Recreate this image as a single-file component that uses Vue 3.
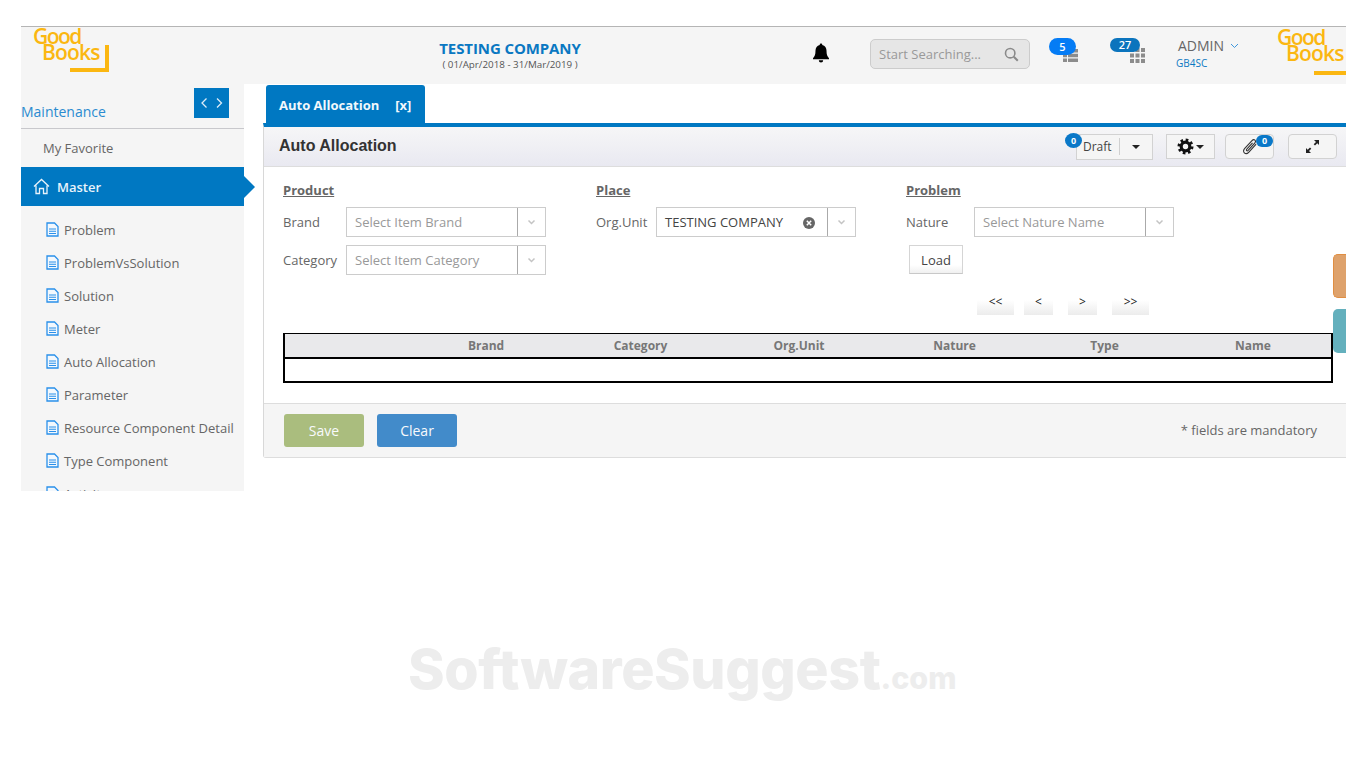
<script setup>
const menu = ['Problem','ProblemVsSolution','Solution','Meter','Auto Allocation','Parameter','Resource Component Detail','Type Component','Activity']
const cols = ['Brand','Category','Org.Unit','Nature','Type','Name']
const pager = [['<<','w37'],['<','w29'],['>','w29'],['>>','w37']]
</script>

<template>
  <div class="page">
    <header class="top">
      <div class="logo">
        <span class="good">Good</span><span class="books">Books</span>
        <i class="bracket"></i>
      </div>
      <div class="company">
        <div class="cname">TESTING COMPANY</div>
        <div class="cdate">( 01/Apr/2018 - 31/Mar/2019 )</div>
      </div>
      <svg class="bell" width="18" height="20" viewBox="0 0 18 20"><path fill="#000" d="M9 0.5a1.3 1.3 0 0 1 1.3 1.4C13 2.5 14.500 4.700 14.500 7.500c0 4 .8 6 2.500 7.700v1.100H1v-1.100C2.700 13.500 3.500 11.500 3.500 7.500 3.500 4.700 5 2.500 7.700 1.900A1.300 1.300 0 0 1 9 .5zM6.800 17.200h4.400a2.200 2.200 0 0 1-4.400 0z"/></svg>
      <div class="search">
        <span>Start Searching...</span>
        <svg width="15" height="15" viewBox="0 0 15 15"><circle cx="6.200" cy="6.200" r="4.700" fill="none" stroke="#8a8a8a" stroke-width="1.600"/><path d="M9.800 9.800l4 4" stroke="#8a8a8a" stroke-width="2"/></svg>
      </div>
      <div class="nav-ic list-ic">
        <svg width="15" height="15" viewBox="0 0 15 15"><path fill="#8c8c8c" d="M0 1h4v3.500H0zM5 1h10v3.500H5zM0 5.800h4v3.500H0zM5 5.800h10v3.500H5zM0 10.600h4v3.500H0zM5 10.600h10v3.500H5z"/></svg>
        <span class="pill pill5">5</span>
      </div>
      <div class="nav-ic grid-ic">
        <svg width="15" height="15" viewBox="0 0 15 15"><path fill="#8c8c8c" d="M0 0h4v4H0zM5.500 0h4v4h-4zM11 0h4v4h-4zM0 5.500h4v4H0zM5.500 5.500h4v4h-4zM11 5.500h4v4h-4zM0 11h4v4H0zM5.500 11h4v4h-4zM11 11h4v4h-4z"/></svg>
        <span class="pill pill27">27</span>
      </div>
      <div class="user">
        <div class="uname">ADMIN
          <svg width="9" height="6" viewBox="0 0 9 6"><path d="M1 1l3.500 3.500L8 1" fill="none" stroke="#3f97dc" stroke-width="1"/></svg>
        </div>
        <div class="ucode">GB4SC</div>
      </div>
      <div class="logo logo-r">
        <span class="good">Good</span><span class="books">Books</span>
        <i class="bracket"></i>
      </div>
    </header>

    <div class="body">
      <aside class="side">
        <div class="side-title">
          <span>Maintenance</span>
          <div class="toggle">
            <svg width="28" height="12" viewBox="0 0 28 12"><path d="M8.500 1.500L4 6 8.500 10.500M19 1.500L23.500 6 19 10.500" fill="none" stroke="#dcecf8" stroke-width="1.300"/></svg>
          </div>
        </div>
        <div class="fav">My Favorite</div>
        <div class="master">
          <svg width="17" height="17" viewBox="0 0 17 17"><path d="M1 8.500L8.500 1.500 16 8.500M3 7.500V15.500H6.500V10.500H10.500V15.500H14V7.500" fill="none" stroke="#e8f3fb" stroke-width="1.300"/></svg>
          <span>Master</span>
          <i class="notch"></i>
        </div>
        <ul class="menu">
          <li v-for="m in menu" :key="m">
            <svg width="13" height="15" viewBox="0 0 13 15"><path d="M1 1h7.500L12 4.500V14H1z" fill="#f3f8fd" stroke="#2a90ea" stroke-width="1.300"/><path d="M3 7h7M3 9.300h7M3 11.500h7" stroke="#2a90ea" stroke-width="1.100"/></svg>
            <span>{{ m }}</span>
          </li>
        </ul>
      </aside>

      <main class="main">
        <div class="tabs">
          <div class="tab"><span>Auto Allocation</span><span>[x]</span></div>
        </div>
        <section class="panel">
          <div class="phead">
            <h1>Auto Allocation</h1>
            <div class="tools">
              <div class="draft">
                <span class="tbadge tb-draft">0</span>
                <span class="dlabel">Draft</span>
                <span class="caret"></span>
              </div>
              <div class="tool gear">
                <svg width="17" height="17" viewBox="0 0 17 17"><circle cx="8.500" cy="8.500" r="6.600" fill="none" stroke="#111" stroke-width="2.800" stroke-dasharray="2.600 2.580"/><circle cx="8.500" cy="8.500" r="4.300" fill="none" stroke="#111" stroke-width="3.200"/></svg>
                <span class="caret small"></span>
              </div>
              <div class="tool round clip">
                <svg width="18" height="20" viewBox="0 0 16 18"><path d="M13.500 6.500L6.800 13.800c-1.200 1.300-2.900 1.400-3.900.5-1-.9-.9-2.600.2-3.800l6.700-7.300c.8-.9 2-1 2.700-.4.700.7.600 1.800-.2 2.700L6.300 12c-.4.400-1 .5-1.300.2-.3-.3-.3-.9.100-1.300l5.200-5.700" fill="none" stroke="#333" stroke-width="1"/></svg>
                <span class="tbadge tb-clip">0</span>
              </div>
              <div class="tool round expand">
                <svg width="15" height="15" viewBox="0 0 15 15"><path fill="#222" d="M9 1h5v5l-1.700-1.700-2.300 2.300-1.300-1.300 2.300-2.300zM1 9l1.700 1.700 2.300-2.300 1.300 1.300-2.300 2.300L6 14H1z"/></svg>
              </div>
            </div>
          </div>

          <div class="form">
            <div class="fields">
              <div class="group g1">
                <div class="gtitle">Product</div>
                <div class="row">
                  <label class="l63">Brand</label>
                  <div class="select"><span class="ph">Select Item Brand</span><b class="arrow"><svg width="9" height="6" viewBox="0 0 9 6"><path d="M1.500 1.500l3 3 3-3" fill="none" stroke="#c4c4c4" stroke-width="1.500"/></svg></b></div>
                </div>
                <div class="row">
                  <label class="l63">Category</label>
                  <div class="select"><span class="ph">Select Item Category</span><b class="arrow"><svg width="9" height="6" viewBox="0 0 9 6"><path d="M1.500 1.500l3 3 3-3" fill="none" stroke="#c4c4c4" stroke-width="1.500"/></svg></b></div>
                </div>
              </div>
              <div class="group g2">
                <div class="gtitle">Place</div>
                <div class="row">
                  <label class="l60">Org.Unit</label>
                  <div class="select">
                    <span class="val">TESTING COMPANY</span>
                    <svg class="clear-x" width="12" height="12" viewBox="0 0 12 12"><circle cx="6" cy="6" r="6" fill="#666"/><path d="M3.800 3.800l4.400 4.400M8.200 3.800L3.800 8.200" stroke="#fff" stroke-width="1.500"/></svg>
                    <b class="arrow"><svg width="9" height="6" viewBox="0 0 9 6"><path d="M1.500 1.500l3 3 3-3" fill="none" stroke="#c4c4c4" stroke-width="1.500"/></svg></b>
                  </div>
                </div>
              </div>
              <div class="group g3">
                <div class="gtitle">Problem</div>
                <div class="row">
                  <label class="l68">Nature</label>
                  <div class="select"><span class="ph">Select Nature Name</span><b class="arrow"><svg width="9" height="6" viewBox="0 0 9 6"><path d="M1.500 1.500l3 3 3-3" fill="none" stroke="#c4c4c4" stroke-width="1.500"/></svg></b></div>
                </div>
                <button class="load">Load</button>
              </div>
            </div>

            <div class="pager">
              <div v-for="p in pager" :key="p[0]" class="pbtn" :class="p[1]">{{ p[0] }}</div>
            </div>

            <div class="table">
              <div class="thead">
                <span class="c0"></span>
                <span v-for="c in cols" :key="c" class="th">{{ c }}</span>
              </div>
              <div class="tbody"></div>
            </div>
          </div>

          <div class="foot">
            <button class="btn save">Save</button>
            <button class="btn clear">Clear</button>
            <span class="mand">* fields are mandatory</span>
          </div>
        </section>
        <i class="stab orange"></i>
        <i class="stab teal"></i>
      </main>
    </div>

    <div class="mark">SoftwareSuggest<small>.com</small></div>
  </div>
</template>

<style>
html, body { margin: 0; background: #fff; }
</style>

<style scoped>
.page { position: relative; width: 1366px; height: 768px; overflow: hidden; box-sizing: border-box; padding: 26px 20px 0 21px; background: #fff; font-family: "Open Sans", sans-serif; color: #666; }

.top { height: 58px; box-sizing: border-box; border-top: 1px solid #b5b5b5; background: #f5f5f5; display: flex; position: relative; overflow: hidden; }
.logo { position: relative; width: 76px; margin-left: 12px; padding-top: 2px; flex: none; color: #fbb711; font-size: 21px; line-height: 15.500px; font-weight: 600; }
.logo span { display: block; }
.good { letter-spacing: -1.500px; }
.books { margin-left: 9px; letter-spacing: -0.800px; }
.bracket { position: absolute; left: 37px; top: 18px; width: 39px; height: 27px; box-sizing: border-box; border-right: 4px solid #fbb711; border-bottom: 4px solid #fbb711; }
.company { width: 300px; margin-left: 251px; text-align: center; flex: none; padding-top: 11px; }
.cname { font-size: 15px; line-height: 20px; font-weight: 700; color: #0a78c2; letter-spacing: -0.1px; }
.cdate { font-size: 9.800px; line-height: 14px; color: #555; }
.bell { flex: none; margin: 16px 0 0 152px; }
.search { flex: none; box-sizing: border-box; width: 160px; height: 30px; margin: 12px 0 0 40px; border: 1px solid #ccc; border-radius: 5px; background: #e6e6e6; display: flex; align-items: center; justify-content: space-between; padding: 0 10px 0 8px; font-size: 13px; color: #999; }
.nav-ic { flex: none; position: relative; width: 15px; height: 15px; margin-top: 21px; }
.list-ic { margin-left: 33px; }
.grid-ic { margin-left: 52px; }
.nav-ic svg { display: block; }
.pill { position: absolute; background: #0a7be8; color: #fff; font-size: 11px; line-height: 15px; height: 15px; text-align: center; font-weight: 600; border-radius: 8px; }
.pill5 { left: -14px; top: -10px; width: 27px; height: 17px; line-height: 17px; border-radius: 9px; background: #057cf5; }
.pill27 { left: -20px; top: -10px; width: 30px; height: 14px; line-height: 13px; background: #0b74bd; }
.user { flex: none; width: 99px; margin-left: 33px; padding-top: 9px; }
.uname { font-size: 14px; line-height: 20px; color: #666; display: flex; align-items: center; gap: 6px; }
.ucode { font-size: 10px; line-height: 12px; color: #0a78c2; margin-top: 1px; margin-left: -2px; }
.logo-r { margin-left: 0; padding-top: 3px; width: 69px; }
.logo-r .bracket { top: 21px; }

.body { display: flex; align-items: flex-start; }
.side { flex: none; width: 223px; background: #f5f5f5; }
.side-title { height: 45px; box-sizing: border-box; border-bottom: 1px solid #c8c8cc; position: relative; font-size: 14px; color: #2a8bd0; padding-top: 18px; line-height: 20px; }
.toggle { position: absolute; left: 173px; top: 4px; width: 35px; height: 30px; background: #0078c2; display: flex; align-items: center; justify-content: center; }
.fav { height: 38px; line-height: 38px; padding-left: 22px; font-size: 13px; color: #666; }
.master { position: relative; height: 39px; background: #0078c2; color: #e8f3fb; display: flex; align-items: center; gap: 7px; padding-left: 12px; font-size: 13px; font-weight: 600; }
.notch { position: absolute; left: 223px; top: 9px; width: 0; height: 0; border-left: 11px solid #0078c2; border-top: 11px solid transparent; border-bottom: 11px solid transparent; }
.menu { list-style: none; margin: 0; padding: 7px 0 0 25px; height: 285px; box-sizing: border-box; overflow: hidden; }
.menu li { height: 33px; display: flex; align-items: center; gap: 5px; font-size: 13px; color: #666; white-space: nowrap; }

.main { position: relative; flex: 1; min-width: 0; }
.tabs { height: 39px; padding: 1px 0 0 22px; box-sizing: border-box; }
.tab { width: 159px; height: 38px; box-sizing: border-box; background: #0078c2; color: #f2f8fc; border-radius: 3px 3px 0 0; display: flex; gap: 16px; padding: 1px 0 0 13px; align-items: center; font-size: 13px; font-weight: 700; white-space: nowrap; }
.panel { margin-left: 19px; border-top: 4px solid #0078c2; border-left: 1px solid #d8d8d8; border-bottom: 1px solid #ddd; border-radius: 0 0 0 3px; }
.phead { height: 40px; box-sizing: border-box; background: linear-gradient(#f6f6f7, #e9e9f1); border-bottom: 1px solid #ddd; display: flex; align-items: center; justify-content: space-between; padding: 0 9px 0 15px; }
.phead h1 { margin: 0 0 2px; font: 700 16px "Liberation Sans", Arial, sans-serif; color: #333; }
.tools { display: flex; align-items: center; gap: 13px; position: relative; }
.tool { box-sizing: border-box; width: 49px; height: 25px; border: 1px solid #d2d2d2; background: #f5f5f5; display: flex; align-items: center; justify-content: center; position: relative; gap: 1px; }
.round { border-radius: 4px; }
.clip { gap: 0; justify-content: flex-start; padding-left: 15px; margin-left: -3px; }
.expand { margin-left: 1px; }
.draft { position: relative; box-sizing: border-box; width: 77px; height: 26px; border: 1px solid #d2d2d2; background: #f5f5f5; display: flex; align-items: center; font-size: 12px; color: #444; padding-left: 6px; }
.dlabel { padding-right: 7px; border-right: 1px solid #d0d0d0; line-height: 17px; }
.caret { width: 0; height: 0; border-left: 4px solid transparent; border-right: 4px solid transparent; border-top: 4px solid #222; margin-left: 12px; }
.caret.small { margin-left: 1px; }
.tbadge { position: absolute; background: #0a78c8; color: #fff; font-size: 9px; font-weight: 700; line-height: 13px; text-align: center; }
.tb-draft { left: -12px; top: -2px; width: 17px; height: 15px; line-height: 15px; border-radius: 50%; }
.tb-clip { left: 30px; top: 0; width: 17px; height: 12px; line-height: 12px; border-radius: 6px; }

.form { height: 236px; box-sizing: border-box; padding: 14px 13px 0 19px; background: #fff; }
.fields { display: flex; height: 123px; }
.group { flex: none; font-size: 13px; color: #666; }
.g1 { width: 313px; }
.g2 { width: 310px; }
.gtitle { font-weight: 700; text-decoration: underline; line-height: 18px; height: 26px; color: #666; }
.row { display: flex; align-items: center; height: 30px; margin-bottom: 8px; }
.l63 { width: 63px; }
.l60 { width: 60px; }
.l68 { width: 68px; }
.select { position: relative; width: 200px; height: 30px; box-sizing: border-box; border: 1px solid #ccc; background: #fff; display: flex; align-items: center; padding-left: 8px; }
.ph { color: #999; }
.val { color: #444; font-size: 13px; }
.arrow { position: absolute; right: 0; top: 0; bottom: 0; width: 27px; border-left: 1px solid #aaa; display: flex; align-items: center; justify-content: center; }
.clear-x { position: absolute; left: 146px; top: 9px; }
.load { display: block; box-sizing: border-box; width: 54px; height: 29px; margin: 0 0 0 3px; padding: 0; border: 1px solid #d5d5d5; border-bottom-color: #c8c8c8; background: linear-gradient(#fff 70%, #f0f0f0); font: 13px "Open Sans", sans-serif; color: #444; }
.pager { display: flex; margin-left: 694px; height: 20px; margin-top: -9px; }
.pbtn { height: 20px; box-sizing: border-box; background: linear-gradient(#fff 25%, #ececec); font-size: 12px; line-height: 13px; color: #222; text-align: center; }
.w37 { width: 37px; margin-right: 10px; }
.w29 { width: 29px; margin-right: 15px; }
.table { margin-top: 18px; box-sizing: border-box; width: 1050px; height: 50px; border: 1px solid #000; border-bottom-width: 2px; border-left-width: 2px; border-right-width: 2px; }
.thead { height: 23px; box-sizing: border-box; background: #e9e9eb; display: grid; grid-template-columns: 124px 154px 155px 162px 149px 151px 146px; align-items: center; text-align: center; font-size: 12px; font-weight: 700; color: #777; }
.tbody { border-top: 2px solid #000; height: 23px; box-sizing: border-box; background: #fff; }

.foot { height: 54px; box-sizing: border-box; background: #f5f5f5; border-top: 1px solid #ddd; display: flex; align-items: flex-start; padding: 10px 29px 0 20px; }
.btn { width: 80px; height: 33px; padding: 0; border: 0; border-radius: 3px; font: 14px "Open Sans", sans-serif; color: #f8fafc; }
.save { background: #aabd7e; margin-right: 13px; }
.clear { background: #428bca; }
.mand { margin-left: auto; font-size: 13px; line-height: 33px; color: #666; }

.stab { position: absolute; left: 1089px; width: 13px; height: 44px; box-sizing: border-box; border-radius: 5px 0 0 5px; }
.orange { top: 170px; background: #dea26c; border: 1px solid #e08e42; border-right: 0; }
.teal { top: 225px; background: #64b0bd; }

.mark { position: absolute; left: 408px; top: 638px; font-family: Inter, sans-serif; font-weight: 800; font-size: 55.500px; line-height: 62px; letter-spacing: -0.400px; color: #ededed; white-space: nowrap; pointer-events: none; }
.mark small { font-size: 30.500px; letter-spacing: 0; }
</style>
